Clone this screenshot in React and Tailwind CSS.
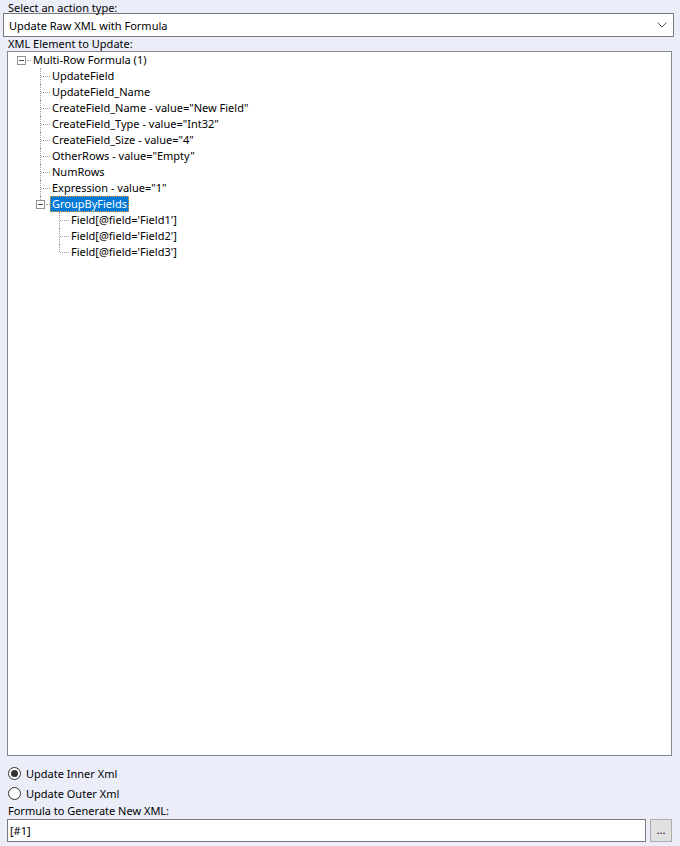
import React from 'react'

const font = { fontFamily: '"Segoe UI", "Noto Sans", sans-serif' }

const nodes = [
  { label: 'Multi-Row Formula (1)', level: 0, box: true, root: true },
  { label: 'UpdateField', level: 1 },
  { label: 'UpdateField_Name', level: 1 },
  { label: 'CreateField_Name - value="New Field"', level: 1 },
  { label: 'CreateField_Type - value="Int32"', level: 1 },
  { label: 'CreateField_Size - value="4"', level: 1 },
  { label: 'OtherRows - value="Empty"', level: 1 },
  { label: 'NumRows', level: 1 },
  { label: 'Expression - value="1"', level: 1 },
  { label: 'GroupByFields', level: 1, box: true, last: true, selected: true },
  { label: "Field[@field='Field1']", level: 2 },
  { label: "Field[@field='Field2']", level: 2 },
  { label: "Field[@field='Field3']", level: 2, last: true },
]

const ExpandBox = () => (
  <div className="absolute left-[5px] top-[4px] w-[9px] h-[9px] border border-[#919191] bg-white flex items-center justify-center z-10">
    <div className="w-[5px] h-px bg-[#4b4b4b]" />
  </div>
)

const Cell = ({ node }) => (
  <div className="relative w-[19px] h-4 shrink-0">
    {/* vertical sibling line */}
    {!node.root && (
      <div
        className={
          'absolute left-[9px] top-0 border-l border-dotted border-[#a0a0a0] ' +
          (node.last ? (node.box ? 'h-[4px]' : 'h-[8px]') : 'h-4')
        }
      />
    )}
    {/* horizontal line to label */}
    <div
      className={
        'absolute top-[8px] right-0 border-t border-dotted border-[#a0a0a0] ' +
        (node.box ? 'left-[15px]' : 'left-[10px]')
      }
    />
    {node.box && <ExpandBox />}
  </div>
)

const Row = ({ node }) => (
  <div className="flex h-4 items-center">
    <div className={node.level === 0 ? 'w-[4px] shrink-0' : node.level === 1 ? 'w-[23px] shrink-0' : 'w-[42px] shrink-0'} />
    <Cell node={node} />
    <span
      className={
        'h-4 px-[2px] leading-[16px] whitespace-nowrap ' +
        (node.selected
          ? 'bg-[#0078d7] text-white outline outline-1 outline-dotted outline-[#f0a030] -outline-offset-1'
          : 'text-black')
      }
    >
      {node.label}
    </span>
  </div>
)

const Radio = ({ checked, label }) => (
  <div className="flex items-center h-4 pl-[8px]">
    <div className="w-[13px] h-[13px] rounded-full border border-[#333] bg-white flex items-center justify-center">
      {checked && <div className="w-[7px] h-[7px] rounded-full bg-[#333]" />}
    </div>
    <span className="ml-[5px] text-black">{label}</span>
  </div>
)

export default function App() {
  return (
    <div style={font} className="w-[680px] h-[846px] bg-[#ebeef9] text-[11px] leading-[13px] flex flex-col overflow-hidden">
      <div className="pl-[8px] h-[13px] leading-[15px] text-black relative z-10">Select an action type:</div>
      <div className="mx-[3px] mr-[6px] h-[24px] border border-[#7a7a7a] bg-white flex items-center justify-between pl-[5px] pr-[6px]">
        <span className="text-black">Update Raw XML with Formula</span>
        <svg width="10" height="6" viewBox="0 0 10 6">
          <path d="M0.5 0.5 L5 5 L9.5 0.5" stroke="#555" fill="none" strokeWidth="1" />
        </svg>
      </div>
      <div className="pl-[8px] h-[14px] leading-[14px] text-black">XML Element to Update:</div>
      <div className="ml-[7px] mr-[8px] h-[705px] border border-[#828790] bg-white">
        {nodes.map((n, i) => (
          <Row key={i} node={n} />
        ))}
      </div>
      <div className="mt-[9px] flex flex-col gap-[4px]">
        <Radio checked label="Update Inner Xml" />
        <Radio label="Update Outer Xml" />
      </div>
      <div className="pl-[8px] mt-[3px] h-[14px] leading-[14px] text-black">Formula to Generate New XML:</div>
      <div className="flex ml-[7px] mr-[8px] mt-[1px] gap-[4px]">
        <div className="flex-1 h-[23px] border border-[#7a7a7a] bg-white flex items-center pl-[2px] text-black">[#1]</div>
        <button className="w-[22px] h-[23px] border border-[#adadad] bg-[#e1e1e1] flex items-center justify-center text-black leading-none pb-[3px]">
          ...
        </button>
      </div>
    </div>
  )
}
